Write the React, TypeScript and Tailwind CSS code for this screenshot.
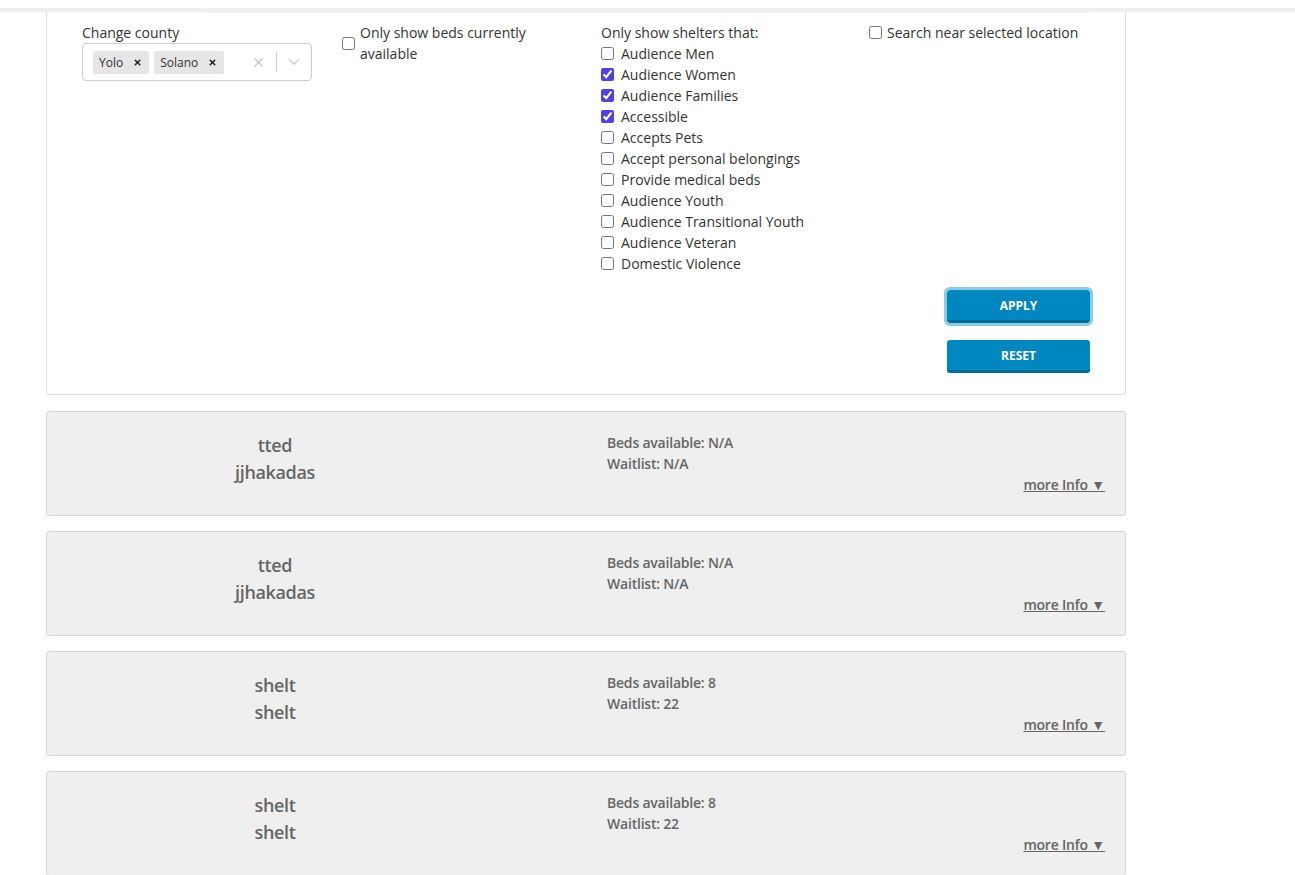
import React from 'react';
import { X, ChevronDown } from 'lucide-react';

const filters = [
  { label: 'Audience Men', checked: false },
  { label: 'Audience Women', checked: true },
  { label: 'Audience Families', checked: true },
  { label: 'Accessible', checked: true },
  { label: 'Accepts Pets', checked: false },
  { label: 'Accept personal belongings', checked: false },
  { label: 'Provide medical beds', checked: false },
  { label: 'Audience Youth', checked: false },
  { label: 'Audience Transitional Youth', checked: false },
  { label: 'Audience Veteran', checked: false },
  { label: 'Domestic Violence', checked: false },
];

const shelters = [
  { name: 'tted', sub: 'jjhakadas', beds: 'N/A', waitlist: 'N/A' },
  { name: 'tted', sub: 'jjhakadas', beds: 'N/A', waitlist: 'N/A' },
  { name: 'shelt', sub: 'shelt', beds: '8', waitlist: '22' },
  { name: 'shelt', sub: 'shelt', beds: '8', waitlist: '22' },
];

function Chip({ label }: { label: string }) {
  return (
    <div className="flex items-center h-[23px] bg-[#e6e6e6] rounded-[2px] pl-[6px] pr-[7px] gap-[10px] text-[12px] text-[#333]">
      <span>{label}</span>
      <X size={9} strokeWidth={4} className="text-[#222]" />
    </div>
  );
}

function Checkbox({ checked }: { checked?: boolean }) {
  return (
    <input
      type="checkbox"
      defaultChecked={checked}
      className="m-0 w-[13px] h-[13px] shrink-0 accent-[#5141e0]"
    />
  );
}

export default function App() {
  return (
    <div className="min-h-screen bg-white font-['Open_Sans',sans-serif] text-[14px] leading-[21px] text-[#333]">
      <div className="h-[8px]" />
      <div className="h-[4px] bg-[#efefef]" />

      <div className="w-[1080px] ml-[46px]">
        {/* filter panel */}
        <div className="relative border-x border-b border-[#dcdcdc] rounded-b-[3px] pl-[20px] pr-[20px] pt-[10px] pb-[21px]">
          <div className="absolute top-0 left-[155px] w-[889px] h-px bg-[#f2f2f2]" />
          <div className="grid grid-cols-[260px_259px_268px_1fr]">
            <div className="px-[15px]">
              <div>Change county</div>
              <div className="flex items-center h-[38px] border border-[#cccccc] rounded-[4px] pl-[10px] pr-[8px]">
                <div className="flex items-center gap-[5px] flex-1">
                  <Chip label="Yolo" />
                  <Chip label="Solano" />
                </div>
                <X size={15} strokeWidth={2.5} className="text-[#cccccc] mr-[10px]" />
                <div className="w-px h-[20px] bg-[#cccccc] mr-[8px]" />
                <ChevronDown size={18} strokeWidth={2} className="text-[#cccccc]" />
              </div>
            </div>

            <div className="px-[15px] pr-[40px]">
              <label className="flex items-center gap-[5px]">
                <Checkbox />
                <span>Only show beds currently available</span>
              </label>
            </div>

            <div className="px-[15px]">
              <div>Only show shelters that:</div>
              {filters.map((f) => (
                <label key={f.label} className="flex items-center gap-[7px]">
                  <Checkbox checked={f.checked} />
                  <span>{f.label}</span>
                </label>
              ))}
            </div>

            <div className="px-[15px]">
              <label className="flex items-center gap-[5px]">
                <Checkbox />
                <span>Search near selected location</span>
              </label>
            </div>
          </div>

          <div className="flex flex-col items-end pr-[15px] mt-[16px] gap-[17px]">
            <button className="w-[143px] h-[33px] bg-[#0087c0] border-b-[3px] border-[#006c9a] rounded-[3px] text-white text-[12px] font-bold outline outline-[3px] outline-[#8ccbe6]">
              APPLY
            </button>
            <button className="w-[143px] h-[33px] bg-[#0087c0] border-b-[3px] border-[#006c9a] rounded-[3px] text-white text-[12px] font-bold">
              RESET
            </button>
          </div>
        </div>

        {/* shelter cards */}
        <div className="flex flex-col gap-[15px] mt-[16px]">
          {shelters.map((s, i) => (
            <div key={i} className="flex bg-[#efefef] border border-[#d6d6d6] rounded-[3px] pt-[20px] pb-[20px] text-[#666]">
              <div className="w-[456px] text-center text-[18px] leading-[27px] font-semibold tracking-[-0.02em]">
                <div>{s.name}</div>
                <div>{s.sub}</div>
              </div>
              <div className="flex-1 pl-[104px] pr-[20px] font-semibold tracking-[-0.015em]">
                <div>Beds available: {s.beds}</div>
                <div>Waitlist: {s.waitlist}</div>
                <div className="flex justify-end">
                  <a className="underline cursor-pointer">more Info ▼</a>
                </div>
              </div>
            </div>
          ))}
        </div>
      </div>
    </div>
  );
}
